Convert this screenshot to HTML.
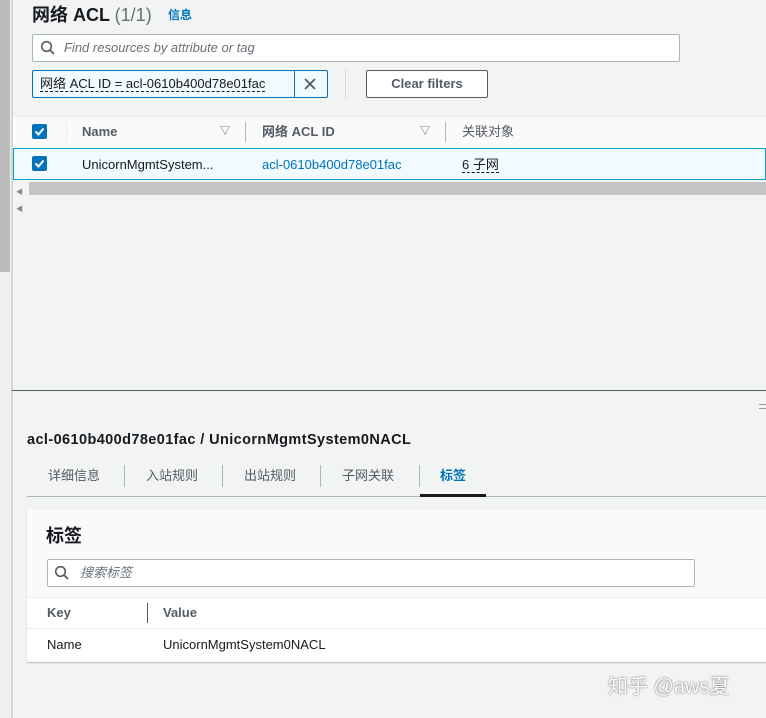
<!DOCTYPE html>
<html><head><meta charset="utf-8"><style>
*{box-sizing:border-box;margin:0;padding:0}
body{width:766px;height:718px;overflow:hidden;background:#f2f3f3;font-family:"Liberation Sans","Noto Sans CJK SC",sans-serif;color:#16191f;position:relative;font-size:13px;line-height:16px}
.a{position:absolute}
</style></head><body>
<div class="a" style="left:0;top:0;width:10px;height:272px;background:#bcbcbc"></div>
<div class="a" style="left:0;top:272px;width:10px;height:446px;background:#f0f0f0"></div>
<div class="a" style="left:11px;top:0;width:2px;height:718px;background:#d5d5d5"></div>

<div class="a" style="left:32px;top:4px;font-size:18px;line-height:22px;font-weight:bold">网络 ACL <span style="font-weight:normal;color:#687078">(1/1)</span></div>
<div class="a" style="left:168px;top:7px;font-size:12px;color:#0073bb;font-weight:bold">信息</div>

<div class="a" style="left:32px;top:34px;width:648px;height:28px;background:#fff;border:1px solid #aab7b8;border-radius:2px"></div>
<svg class="a" style="left:40px;top:40px" width="16" height="16" viewBox="0 0 16 16"><circle cx="6.5" cy="6.5" r="4.8" fill="none" stroke="#545b64" stroke-width="1.6"/><path d="M10 10l4 4" stroke="#545b64" stroke-width="1.8"/></svg>
<div class="a" style="left:64px;top:40px;font-style:italic;color:#687078;font-size:13px">Find resources by attribute or tag</div>

<div class="a" style="left:32px;top:70px;width:296px;height:28px;background:#f1faff;border:1px solid #0073bb;border-radius:2px"></div>
<div class="a" style="left:294px;top:70px;width:1px;height:28px;background:#0073bb"></div>
<div class="a" style="left:40px;top:76px;font-size:13px;border-bottom:1px dashed #16191f;line-height:15px">网络 ACL ID = acl-0610b400d78e01fac</div>
<svg class="a" style="left:303px;top:77px" width="14" height="14"><path d="M2 2L12 12M12 2L2 12" stroke="#545b64" stroke-width="1.8"/></svg>
<div class="a" style="left:345px;top:70px;width:1px;height:28px;background:#d5dbdb"></div>
<div class="a" style="left:366px;top:70px;width:122px;height:28px;background:#fff;border:1px solid #545b64;border-radius:2px;font-weight:bold;text-align:center;line-height:26px;color:#545b64">Clear filters</div>

<div class="a" style="left:13px;top:116px;width:753px;height:32px;background:#fafafa;border-top:1px solid #eaeded"></div>
<div class="a" style="left:32px;top:124px;width:15px;height:15px;background:#0073bb;border-radius:2px"></div>
<svg class="a" style="left:32px;top:124px" width="15" height="15"><path d="M3.5 7.5l3 3 5-6" fill="none" stroke="#fff" stroke-width="2"/></svg>
<div class="a" style="left:66px;top:122px;width:1px;height:20px;background:#eaeded"></div>
<div class="a" style="left:82px;top:124px;font-weight:bold;color:#545b64">Name</div>
<div class="a" style="left:220px;top:124px;font-size:10px;color:#545b64">▽</div>
<div class="a" style="left:245px;top:122px;width:1px;height:20px;background:#aab7b8"></div>
<div class="a" style="left:262px;top:124px;font-weight:bold;color:#545b64">网络 ACL ID</div>
<div class="a" style="left:420px;top:124px;font-size:10px;color:#545b64">▽</div>
<div class="a" style="left:445px;top:122px;width:1px;height:20px;background:#aab7b8"></div>
<div class="a" style="left:462px;top:124px;color:#545b64">关联对象</div>

<div class="a" style="left:13px;top:148px;width:753px;height:32px;background:#f1faff;border:1px solid #00a1c9"></div>
<div class="a" style="left:32px;top:156px;width:15px;height:15px;background:#0073bb;border-radius:2px"></div>
<svg class="a" style="left:32px;top:156px" width="15" height="15"><path d="M3.5 7.5l3 3 5-6" fill="none" stroke="#fff" stroke-width="2"/></svg>
<div class="a" style="left:82px;top:157px">UnicornMgmtSystem...</div>
<div class="a" style="left:262px;top:157px;color:#0073bb">acl-0610b400d78e01fac</div>
<div class="a" style="left:462px;top:157px;border-bottom:1px dashed #16191f;line-height:15px">6 子网</div>

<div class="a" style="left:29px;top:182px;width:737px;height:13px;background:#c4c4c4"></div>
<div class="a" style="left:16px;top:185px;font-size:7px;color:#888">◀</div>
<div class="a" style="left:16px;top:202px;font-size:7px;color:#888">◀</div>

<div class="a" style="left:12px;top:390px;width:754px;height:1px;background:#545b64"></div>
<div class="a" style="left:759px;top:404px;width:7px;height:1px;background:#999"></div>
<div class="a" style="left:759px;top:408px;width:7px;height:1px;background:#999"></div>

<div class="a" style="left:27px;top:432px;font-size:14.5px;font-weight:bold;letter-spacing:0.4px">acl-0610b400d78e01fac / UnicornMgmtSystem0NACL</div>
<div class="a" style="left:48px;top:468px;color:#545b64">详细信息</div>
<div class="a" style="left:124px;top:465px;width:1px;height:22px;background:#aab7b8"></div>
<div class="a" style="left:146px;top:468px;color:#545b64">入站规则</div>
<div class="a" style="left:222px;top:465px;width:1px;height:22px;background:#aab7b8"></div>
<div class="a" style="left:244px;top:468px;color:#545b64">出站规则</div>
<div class="a" style="left:320px;top:465px;width:1px;height:22px;background:#aab7b8"></div>
<div class="a" style="left:342px;top:468px;color:#545b64">子网关联</div>
<div class="a" style="left:419px;top:465px;width:1px;height:22px;background:#aab7b8"></div>
<div class="a" style="left:440px;top:468px;color:#0073bb;font-weight:bold">标签</div>
<div class="a" style="left:27px;top:496px;width:739px;height:1px;background:#aab7b8"></div>
<div class="a" style="left:420px;top:494px;width:66px;height:3px;background:#16191f"></div>

<div class="a" style="left:27px;top:510px;width:739px;height:152px;background:#fff;box-shadow:0 1px 1px #aab7b8"></div>
<div class="a" style="left:27px;top:510px;width:739px;height:88px;background:#fafafa"></div>
<div class="a" style="left:46px;top:525px;font-size:18px;line-height:22px;font-weight:bold">标签</div>
<div class="a" style="left:47px;top:559px;width:648px;height:28px;background:#fff;border:1px solid #aab7b8;border-radius:2px"></div>
<svg class="a" style="left:54px;top:565px" width="16" height="16" viewBox="0 0 16 16"><circle cx="6.5" cy="6.5" r="4.8" fill="none" stroke="#545b64" stroke-width="1.6"/><path d="M10 10l4 4" stroke="#545b64" stroke-width="1.8"/></svg>
<div class="a" style="left:80px;top:565px;font-style:italic;color:#687078">搜索标签</div>
<div class="a" style="left:27px;top:597px;width:739px;height:1px;background:#eaeded"></div>
<div class="a" style="left:47px;top:605px;font-weight:bold;color:#545b64">Key</div>
<div class="a" style="left:147px;top:603px;width:1px;height:20px;background:#545b64"></div>
<div class="a" style="left:163px;top:605px;font-weight:bold;color:#545b64">Value</div>
<div class="a" style="left:27px;top:628px;width:739px;height:1px;background:#eaeded"></div>
<div class="a" style="left:47px;top:637px">Name</div>
<div class="a" style="left:163px;top:637px">UnicornMgmtSystem0NACL</div>

<div class="a" style="left:608px;top:674px;font-size:20px;line-height:26px;color:#fff;text-shadow:0 0 1px #666,0 0 2px #999">知乎 @aws夏</div>
</body></html>
